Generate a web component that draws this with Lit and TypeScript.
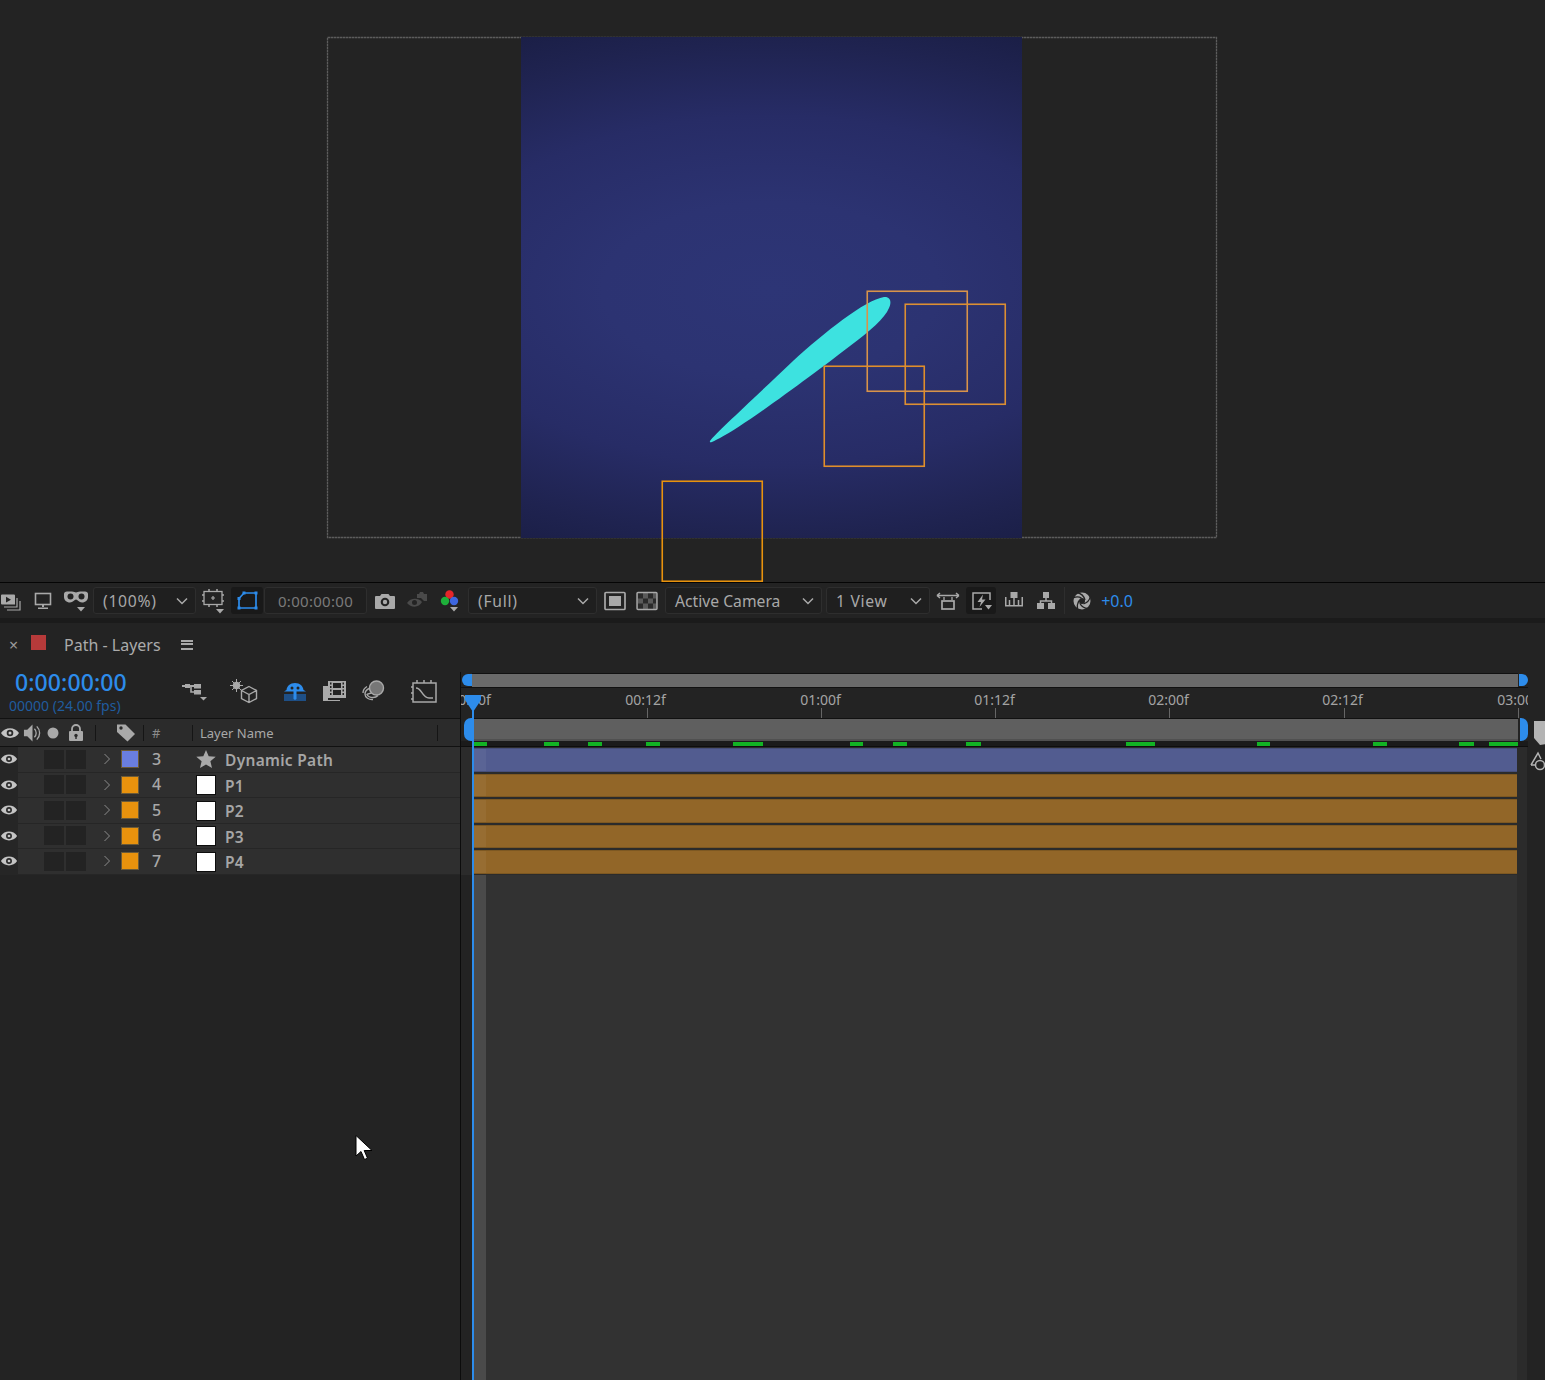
import { LitElement, html, svg, css } from "lit";
import { customElement } from "lit/decorators.js";

const G = "#a9a9a9";
const box = (w: number, h: number, inner: unknown) => html`<svg width=${w} height=${h} viewBox="0 0 ${w} ${h}">${inner}</svg>`;
const caret = (x: number, y: number) => svg`<path transform="translate(${x} ${y})" d="M0 0H8L4 4.500Z" fill=${G}/>`;

const icons: Record<string, unknown> = {
  footage: box(22, 22, svg`<path d="M1 5.500a1 1 0 0 1 1-1h12a1 1 0 0 1 1 1v9H2a1 1 0 0 1-1-1Z" fill=${G}/><path d="M6 6.800l5 2.900-5 2.900Z" fill="#232323"/><path d="M17 8v9H4M20 11v9H7" fill="none" stroke=${G} stroke-width="1.200"/>`),
  monitor: box(20, 22, svg`<rect x="2.500" y="3.500" width="15" height="11" fill="none" stroke=${G} stroke-width="1.600"/><path d="M9 15h2v2H9ZM5 17.500h10V19H5Z" fill=${G}/>`),
  mask: box(26, 24, svg`<path d="M1 5c0-1.600 1.200-2.500 3-2.500h5c2 0 3 1 4 1s2-1 4-1h5c1.800 0 3 .9 3 2.500v3c0 3-2.500 5.500-6 5.500-3 0-4.500-3-6-3s-3 3-6 3C3.500 13.500 1 11 1 8Z" fill=${G}/><circle cx="7.500" cy="7.500" r="3" fill="#232323"/><circle cx="18.500" cy="7.500" r="3" fill="#232323"/>${caret(14, 18)}`),
  region: box(22, 26, svg`<rect x="2" y="3.500" width="18" height="13" fill="none" stroke=${G} stroke-width="1.300"/><path d="M0 7h2M0 13h2M20 7h2M20 13h2M7 1v2.500M15 1v2.500M7 16.500V19M15 16.500V19" stroke=${G} stroke-width="1.500"/><path d="M11 8v4M9 10h4" stroke=${G} stroke-width="1.200"/>${caret(14, 21)}`),
  maskPath: box(24, 22, svg`<path d="M4 8.500 9 3h12v15H4Z" fill="none" stroke="#2d8ceb" stroke-width="1.700"/><path d="M7.500 1.500h3v3h-3ZM19.500 1.500h3v3h-3ZM2.500 7h3v3h-3ZM2.500 16.500h3v3h-3ZM19.500 16.500h3v3h-3Z" fill="#2d8ceb"/>`),
  camera: box(22, 18, svg`<path d="M1 5a1 1 0 0 1 1-1h4l1.500-2h7L16 4h4a1 1 0 0 1 1 1v11a1 1 0 0 1-1 1H2a1 1 0 0 1-1-1Z" fill=${G}/><circle cx="11" cy="10" r="4.300" fill="#232323"/><circle cx="11" cy="10" r="2.200" fill=${G}/>`),
  snap: box(22, 22, svg`<path d="M1 13c3-5 11-6 15-1-3 6-11 6-15 1Z" fill="#4a4a4a"/><circle cx="8.500" cy="12.500" r="2.500" fill="#232323"/><path d="M11 4h2l1-2h3l1 2h3v7h-3l-3-3h-4Z" fill="#4a4a4a"/>`),
  color: box(22, 24, svg`<circle cx="10.500" cy="5.500" r="4.200" fill="#e3262a"/><circle cx="6" cy="12" r="4.200" fill="#1eb03a"/><circle cx="15" cy="12" r="4.200" fill="#3d66e0"/>${caret(11, 18)}`),
  overlay: box(22, 20, svg`<rect x="1" y="1.500" width="20" height="17" rx="1" fill="none" stroke=${G} stroke-width="1.700"/><rect x="5" y="5" width="12" height="10" fill=${G}/>`),
  checker: box(22, 20, svg`<rect x="1" y="1.500" width="20" height="17" rx="1" fill="#5a5a5a" stroke=${G} stroke-width="1.400"/><path d="M2 2.500h5v5H2ZM12 2.500h5v5h-5ZM7 7.500h5v5H7ZM17 7.500h3v5h-3ZM2 12.500h5v5H2ZM12 12.500h5v5h-5Z" fill="#2a2a2a"/>`),
  reset3d: box(24, 20, svg`<path d="M1 4.500h22M1 4.500 4 2M1 4.500 4 7M23 4.500 20 2M23 4.500 20 7" fill="none" stroke=${G} stroke-width="1.500"/><rect x="6" y="10" width="12" height="8" fill="none" stroke=${G} stroke-width="1.700"/><path d="M8 6v3M16 6v3" stroke=${G} stroke-width="1.300"/>`),
  fast: box(22, 22, svg`<path d="M20 10V3H3v16h9" fill="none" stroke=${G} stroke-width="1.500"/><path d="M13 4.500 7.500 12h3.500l-1.500 5 6-7.500h-3.500Z" fill=${G}/><path d="M15 15h7l-3.500 4.500Z" fill=${G}/>`),
  flow1: box(22, 20, svg`<path d="M2 6h1.500v8h15V6H20v9.500H2Z" fill=${G}/><rect x="7.500" y="1" width="7" height="6" fill=${G}/><path d="M11 7v7M6.500 9v5M15.500 9v5" stroke=${G} stroke-width="1.500"/>`),
  flow2: box(22, 20, svg`<rect x="8" y="1" width="6" height="6" fill=${G}/><rect x="2" y="12" width="7" height="6" fill=${G}/><rect x="13" y="12" width="7" height="6" fill=${G}/><path d="M11 7v3M5.500 12v-2h11v2" fill="none" stroke=${G} stroke-width="1.500"/>`),
  shutter: box(20, 20, svg`<circle cx="10" cy="10" r="8.500" fill=${G}/><circle cx="10" cy="10" r="3" fill="#232323"/><path d="M13 9C12 5 9 2.500 5 1.500M11.500 12.800c3.500-1 6-3.500 7-7.500M7.800 12.200c1.500 3 4.500 5 8.500 5.500M7 9.500C5.500 12 5 15 5.500 18.500M9.500 7C7 5.500 4 5.500 1 7" fill="none" stroke="#232323" stroke-width="1.300"/>`),
  flow: box(26, 20, svg`<path d="M1 5h7M8 5h7" stroke=${G} stroke-width="2"/><rect x="4" y="3" width="5" height="4" fill=${G}/><rect x="13" y="3" width="7" height="4.500" fill=${G}/><path d="M10 5v6h4" fill="none" stroke=${G} stroke-width="1.600"/><rect x="13" y="9" width="7" height="4.500" fill=${G}/><path d="M19 16h7l-3.500 3.500Z" fill=${G}/>`),
  draft: box(28, 26, svg`<circle cx="6.500" cy="7.500" r="3.700" fill=${G}/><path d="M6.500 1v13M0 7.500h13M2 3l9 9M11 3l-9 9" stroke=${G} stroke-width="1"/><path d="M19 8.500l7.500 4v8L19 24.500l-7.500-4v-8Zm-7.500 4 7.500 4 7.500-4M19 16.500v8" fill="#232323" stroke=${G} stroke-width="1.400"/>`),
  motion: box(24, 22, svg`<path d="M1 14h22v7H1Z" fill="#1e4f86"/><path d="M12 3C7 3 4 6 3.500 10l-2.500 1.500h22L20.500 10C20 6 17 3 12 3Z" fill="#2d8ceb"/><circle cx="9" cy="8" r="1.500" fill="#232323"/><circle cx="15" cy="8" r="1.500" fill="#232323"/><path d="M10.500 10h3v9l-1.500 1-1.500-1Z" fill="#2d8ceb"/>`),
  frames: box(24, 22, svg`<path d="M0 6h5v14h12v1H0Z" fill=${G}/><rect x="5" y="1" width="18" height="17" fill=${G}/><path d="M7 2.500h1.500v2H7ZM7 6h1.500v2H7ZM7 9.500h1.500v2H7ZM7 13h1.500v2H7ZM19.500 2.500H21v2h-1.500ZM19.500 6H21v2h-1.500ZM19.500 9.500H21v2h-1.500ZM19.500 13H21v2h-1.500Z" fill="#232323"/><path d="M10 3h8v5h-8ZM10 10h8v5h-8Z" fill="#232323"/>`),
  brain: box(24, 22, svg`<path d="M7 8.500c-2 1-4 2.500-4 5.500 0 3.500 4 6 8 5.500M5 6.500C2.500 8 1 10 1 13" fill="none" stroke=${G} stroke-width="1.400"/><path d="M9.500 13c-2 .5-4 1-4.500 1.500 1 2 3.500 3 6 3 2.500 0 4-1 5-2" fill="none" stroke=${G} stroke-width="1.400"/><circle cx="14.500" cy="8" r="7" fill="#777" stroke=${G} stroke-width="1.400"/>`),
  graph: box(26, 24, svg`<rect x="2" y="4" width="23" height="19" fill="none" stroke=${G} stroke-width="1.500"/><path d="M6 1v3M13 1v3M20 1v3M0 8h2M0 14h2M0 20h2" stroke=${G} stroke-width="1.500"/><path d="M5 9c6 0 6 10 13 10h4" fill="none" stroke=${G} stroke-width="1.500"/>`),
  eye: box(20, 14, svg`<path d="M1 7c4-6.500 14-6.500 18 0-4 6.500-14 6.500-18 0Z" fill="#c4c4c4"/><circle cx="10" cy="7" r="3.300" fill="#2a2a2a"/><circle cx="10" cy="7" r="1.500" fill="#c4c4c4"/>`),
  speaker: box(20, 20, svg`<path d="M1 6.500h3.500L10 1v18l-5.500-5.500H1Z" fill=${G}/><path d="M12 5.500c2.500 2.500 2.500 6.500 0 9M14.500 3c4 4 4 10 0 14" fill="none" stroke=${G} stroke-width="1.400"/>`),
  dot: box(12, 12, svg`<circle cx="6" cy="6" r="5.500" fill=${G}/>`),
  lock: box(16, 18, svg`<rect x="1" y="7" width="14" height="10" rx="1" fill=${G}/><path d="M4 8V5a4 4 0 0 1 8 0v3" fill="none" stroke=${G} stroke-width="1.800"/><circle cx="8" cy="11.500" r="1.700" fill="#2a2a2a"/><rect x="7.300" y="12" width="1.400" height="3" fill="#2a2a2a"/>`),
  tag: box(20, 20, svg`<path d="M1 1.500h8.500L19 11l-7.500 7.500L1 9Z" fill=${G}/><circle cx="5" cy="5" r="1.700" fill="#2a2a2a"/>`),
  star: box(20, 18, svg`<path d="M10 0l2.700 6.200 7 .6-5.300 4.500 1.600 6.700L10 14.500 4 18l1.600-6.700L.3 6.800l7-.6Z" fill=${G}/>`),
  chev: box(8, 12, svg`<path d="M1.500 1 6.500 6l-5 5" fill="none" stroke="#8c8c8c" stroke-width="1"/>`),
  down: box(12, 8, svg`<path d="M1 1.500 6 6.500l5-5" fill="none" stroke=${G} stroke-width="1.500"/>`),
};

const greens = [[473,487],[544,559],[588,602],[646,660],[733,763],[850,863],[893,907],[966,981],[1126,1155],[1257,1270],[1373,1387],[1459,1474],[1489,1518]];
const ticks = [["00:00f",470.500,472],["00:12f",645.500,647],["01:00f",820.500,821],["01:12f",994.500,995],["02:00f",1168.500,1169],["02:12f",1342.500,1344],["03:00f",1517.500,1518]] as [string,number,number][];
const layers = [
  { n: 3, name: "Dynamic Path", c: "#6a7ee0", star: true },
  { n: 4, name: "P1", c: "#e8920d" },
  { n: 5, name: "P2", c: "#e8920d" },
  { n: 6, name: "P3", c: "#e8920d" },
  { n: 7, name: "P4", c: "#e8920d" },
];

@customElement("app-root")
export class AppRoot extends LitElement {
  static styles = css`
    :host { display: block; width: 1545px; height: 1380px; background: #232323; overflow: hidden; position: relative;
      font-family: "Noto Sans", "Open Sans", sans-serif; color: #a8a8a8; }
    svg { display: block; }
    .viewer { height: 582px; border-bottom: 1px solid #050505; }
    .bar { height: 35px; display: flex; align-items: center; background: #232323; position: relative; }
    .bi { display: flex; align-items: center; justify-content: center; flex: none; height: 27px; }
    .dd { border: 1px solid #2e2e2e; background: #1f1f1f; border-radius: 3px; box-sizing: border-box; padding: 0 7px 0 9px;
      justify-content: space-between; font-size: 15.700px; color: #a8a8a8; white-space: nowrap; }
    .wide { letter-spacing: .700px; }
    .on { background: #191919; border-radius: 3px; }
    .time { justify-content: center; color: #7a7a7a; font-size: 15px; letter-spacing: .300px; padding: 0; }
    .plus { color: #2d8ceb; font-size: 16px; }
    .vsep { width: 1px; height: 27px; background: #2e2e2e; flex: none; margin-left: 7px; }
    .gap { height: 5px; background: #1b1b1b; }
    .panel { display: grid; grid-template-columns: 461px 1084px; height: 757px; }
    .left { width: 461px; }
    .lbody { position: relative; }
    .lbody::after { content: ""; position: absolute; right: 0; top: 5px; height: 708px; width: 1px; background: #0c0c0c; }
    .tab { height: 44px; display: flex; align-items: center; font-size: 16px; color: #ababab; padding-left: 9px; }
    .x { font-size: 16px; width: 22px; color: #9a9a9a; line-height: 1; }
    .red { width: 15px; height: 15px; background: #b63a3a; margin: -5px 18px 0 0; }
    .burger { margin-left: 20px; width: 12px; height: 10px; border-top: 2px solid #a8a8a8; border-bottom: 2px solid #a8a8a8; position: relative; box-sizing: border-box; }
    .burger::after { content: ""; display: block; height: 2px; margin-top: 1px; background: #a8a8a8; }
    .tools { height: 51px; display: flex; }
    .clock { width: 181px; padding: 0 0 0 9px; box-sizing: border-box; flex: none; }
    .big { color: #2d8ceb; font-size: 23px; font-weight: 500; line-height: 30px; padding-left: 6px; letter-spacing: .100px; }
    .sub { color: #205c9e; font-size: 14px; line-height: 17px; }
    .ti { display: flex; align-items: center; height: 48px; flex: none; }
    .head { height: 27px; border-top: 1px solid #111; border-bottom: 1px solid #111; background: #2b2b2b; display: flex; align-items: center; position: relative; font-size: 13px; }
    .cell { display: flex; align-items: center; justify-content: center; flex: none; box-sizing: border-box; }
    .sep { width: 1px; height: 16px; background: #151515; flex: none; }
    .row { height: 24.500px; background: #2f2f2f; border-bottom: 1px solid #262626; display: flex; align-items: center; font-size: 16px; }
    .eye { width: 18px; height: 100%; background: #262626; display: flex; align-items: center; justify-content: center; flex: none; }
    .sw { width: 20px; height: 19px; background: #232323; flex: none; }
    .lab { width: 18px; height: 18px; border: 1px solid #6b5a38; box-sizing: border-box; flex: none; }
    .num { width: 57px; padding-left: 13px; box-sizing: border-box; flex: none; font-weight: 500; margin-top: -1px; }
    .src { width: 29px; flex: none; display: flex; justify-content: flex-start; }
    .white { width: 20px; height: 20px; border: 1px solid #0d0d0d; background: #fff; box-sizing: border-box; margin-top: 1px; }
    .lname { font-weight: 600; font-size: 15.500px; letter-spacing: .300px; color: #a6a6a6; padding-top: 2px; }
    .right { position: relative; background: #232323; overflow: hidden; }
    .nav { margin: 50px 27px 0 11px; height: 13px; background: #6a6a6a; border-top: 1px solid #111; position: relative; }
    .hL, .hR { position: absolute; background: #2d8ceb; }
    .hL { border-radius: 7px 0 0 7px; } .hR { border-radius: 0 7px 7px 0; }
    .ruler { height: 31px; position: relative; border-top: 1px solid #111; box-sizing: border-box; width: 1067px; overflow: hidden; }
    .t { position: absolute; top: 2px; font-size: 14px; transform: translateX(-50%); color: #a3a3a3; white-space: nowrap; }
    .tk { position: absolute; bottom: 0; width: 1px; height: 10px; background: #666; }
    .work { margin-left: 11px; width: 1046px; height: 23px; background: #5f5f5f; border-top: 1px solid #111; box-sizing: border-box; border-bottom: 2px solid #505050; position: relative; }
    .cache { height: 6px; box-sizing: border-box; background: #1b1b1b; position: relative; width: 1067px; border-bottom: 1px solid #0e0e0e; }
    .g { position: absolute; top: 1px; height: 4px; background: #12b324; }
    .tr { height: 25.500px; padding: 1px 0 0 11px; display: flex; box-sizing: border-box; width: 1066px; background: #2b2b2b; }
    .tb { width: 1045px; height: 23.500px; position: relative; box-sizing: border-box; }
    .tb::before { content: ""; position: absolute; left: 0; top: 0; bottom: 0; width: 14px; background: rgba(255,255,255,.05); }
    .blue { background: #525c90; border-top: 1px solid #474f7a; border-bottom: 1px solid #474f7a; }
    .brown { background: #926628; border-top: 1px solid #7d5822; border-bottom: 1px solid #7d5822; }
    .empty { height: 508px; width: 1066px; display: grid; grid-template-columns: 11px 14px 1031px 10px; }
    .e0 { background: #232323; } .e1 { background: #4a4a4a; } .e2 { background: #323232; } .e3 { background: #2b2b2b; }
    .cti { position: absolute; left: 4px; top: 72px; }
    .line { position: absolute; left: 11px; top: 77px; bottom: 0; width: 1.500px; background: #2d8ceb; }
    .rsw { position: absolute; left: 1073px; top: 98px; }
    .rsw2 { position: absolute; left: 1069px; top: 127px; }
    .mouse { position: absolute; left: 354px; top: 1134px; }
  `;

  private item(w: number, gap: number, cls: string, content: unknown) {
    return html`<div class="bi ${cls}" style="width:${w}px;margin-left:${gap}px">${content}</div>`;
  }

  private toolbar() {
    const it = this.item.bind(this);
    const i = icons;
    return html`<div class="bar">
      ${it(22, 0, "", i.footage)}${it(20, 11, "", i.monitor)}${it(26, 10, "", i.mask)}
      ${it(103, 4, "dd wide", html`<span>(100%)</span>${i.down}`)}
      ${it(22, 6, "", i.region)}${it(32, 7, "on", i.maskPath)}
      ${it(103, 1, "dd time", "0:00:00:00")}
      ${it(22, 7, "", i.camera)}${it(22, 10, "", i.snap)}${it(22, 11, "", i.color)}
      ${it(129, 7, "dd wide", html`<span>(Full)</span>${i.down}`)}
      ${it(22, 7, "", i.overlay)}${it(22, 10, "", i.checker)}
      ${it(157, 7, "dd", html`<span>Active Camera</span>${i.down}`)}
      ${it(104, 4, "dd wide", html`<span>1 View</span>${i.down}`)}
      ${it(24, 6, "", i.reset3d)}${it(30, 6, "on", i.fast)}${it(22, 7, "", i.flow1)}${it(22, 10, "", i.flow2)}
      <div class="vsep"></div>
      ${it(20, 7, "", i.shutter)}${it(36, 7, "plus", "+0.0")}
    </div>`;
  }

  private comp() {
    const sq = [[867,291,"#d8934a"],[905,304,"#dc8f33"],[824,366,"#e08e2b"],[662,481,"#e8920d"]] as [number,number,string][];
    return html`<svg width="1545" height="582" viewBox="0 0 1545 582">
      <defs><radialGradient id="rg" gradientUnits="userSpaceOnUse" cx="0" cy="0" r="1" gradientTransform="translate(771 290) scale(560 290)">
        <stop offset="0" stop-color="#2d3576"/><stop offset=".3" stop-color="#2c3372"/><stop offset=".6" stop-color="#272c66"/><stop offset=".85" stop-color="#1f2350"/><stop offset="1" stop-color="#1a1e45"/>
      </radialGradient></defs>
      <rect x="327.500" y="37.500" width="889" height="500" fill="none" stroke="#5c5c5c" stroke-width="1.300" stroke-dasharray="2.500 .5"/>
      <rect x="521" y="37" width="501" height="501" fill="url(#rg)"/>
      <path d="M710 441C716 433 750 402 793 361C825 332 865 300 884 297C892 296.500 891 304 889 308C885 318 870 331 850 346C815 373 745 425 720 438C714 441 709 444 710 441Z" fill="#3de2e0"/>
      ${sq.map(([x, y, c]) => svg`<rect x=${x + .25} y=${y + .25} width="100" height="100" fill="none" stroke=${c} stroke-width="1.600"/>`)}
    </svg>`;
  }

  render() {
    const i = icons;
    return html`
      <div class="viewer">${this.comp()}</div>
      ${this.toolbar()}
      <div class="gap"></div>
      <div class="panel">
        <div class="left">
          <div class="tab"><span class="x">×</span><span class="red"></span><span>Path - Layers</span><span class="burger"></span></div>
          <div class="lbody">
          <div class="tools">
            <div class="clock"><div class="big">0:00:00:00</div><div class="sub">00000 (24.00 fps)</div></div>
            <div class="ti">${i.flow}</div>
            <div class="ti" style="margin-left:23px">${i.draft}</div>
            <div class="ti" style="margin-left:25px">${i.motion}</div>
            <div class="ti" style="margin-left:16px">${i.frames}</div>
            <div class="ti" style="margin-left:15px">${i.brain}</div>
            <div class="ti" style="margin-left:25px">${i.graph}</div>
          </div>
          <div class="head">
            <div class="cell" style="width:20px">${i.eye}</div>
            <div class="cell" style="width:22px;padding-left:3px">${i.speaker}</div>
            <div class="cell" style="width:22px">${i.dot}</div>
            <div class="cell" style="width:24px">${i.lock}</div>
            <div class="sep" style="margin-left:7px"></div>
            <div class="cell" style="width:47px;padding-left:12px">${i.tag}</div>
            <div class="sep"></div>
            <div class="cell" style="width:48px;justify-content:flex-start;padding-left:8px;color:#8a8a8a">#</div>
            <div class="sep"></div>
            <div class="cell" style="width:244px;justify-content:flex-start;padding-left:7px">Layer Name</div>
            <div class="sep"></div>
          </div>
          ${layers.map(l => html`<div class="row">
            <div class="eye">${i.eye}</div>
            <div class="sw" style="margin-left:26px"></div><div class="sw" style="margin-left:2px"></div>
            <div class="cell" style="margin-left:17px;width:8px">${i.chev}</div>
            <div class="lab" style="margin-left:10px;background:${l.c}"></div>
            <div class="num">${l.n}</div>
            <div class="src">${l.star ? i.star : html`<div class="white"></div>`}</div>
            <div class="lname">${l.name}</div>
          </div>`)}
          </div>
        </div>
        <div class="right">
          <div class="nav"></div>
          <div class="hL" style="left:1px;top:51px;width:10px;height:12px"></div>
          <div class="hR" style="left:1058px;top:51px;width:9px;height:12px"></div>
          <div class="ruler">
            ${ticks.map(([s, c, k]) => html`<span class="t" style="left:${c - 461}px">${s}</span><span class="tk" style="left:${k - 461}px"></span>`)}
          </div>
          <div class="work"></div>
          <div class="hL" style="left:3px;top:95px;width:8px;height:23px"></div>
          <div class="hR" style="left:1059px;top:95px;width:8px;height:23px"></div>
          <div class="cache">${greens.map(([a, b]) => html`<span class="g" style="left:${a - 461}px;width:${b - a}px"></span>`)}</div>
          ${layers.map((l, k) => html`<div class="tr"><div class="tb ${k ? "brown" : "blue"}"></div></div>`)}
          <div class="empty"><div class="e0"></div><div class="e1"></div><div class="e2"></div><div class="e3"></div></div>
          <svg class="cti" width="16" height="18" viewBox="0 0 16 18"><path d="M0 0H16V5L8 17L0 5Z" fill="#2d8ceb"/></svg>
          <div class="line"></div>
          <svg class="rsw" width="12" height="24" viewBox="0 0 12 24"><path d="M0 0H12V23L6 24 0 17Z" fill="#b4b4b4"/></svg>
          <svg class="rsw2" width="16" height="22" viewBox="0 0 16 22"><path d="M1 15 8 3l3 6" fill="none" stroke="#b4b4b4" stroke-width="1.500"/><path d="M1 15h5" stroke="#b4b4b4" stroke-width="1.500"/><circle cx="10" cy="15" r="4.500" fill="none" stroke="#b4b4b4" stroke-width="1.500"/></svg>
        </div>
      </div>
      <svg class="mouse" width="22" height="30" viewBox="0 0 22 30"><path d="M2 1.500V22l5-4.500 3.500 8 3-1.300-3.300-7.700H18Z" fill="#fff" stroke="#000"/></svg>
    `;
  }
}
